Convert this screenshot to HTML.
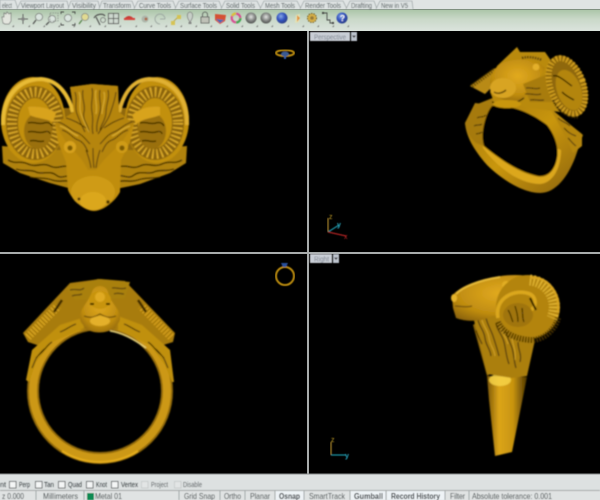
<!DOCTYPE html>
<html><head><meta charset="utf-8"><style>
html,body{margin:0;padding:0;background:#000;width:600px;height:500px;overflow:hidden}
svg{display:block}
text{font-family:"Liberation Sans",sans-serif}
</style></head><body>
<svg width="600" height="500" viewBox="0 0 600 500" xmlns="http://www.w3.org/2000/svg">
<defs>
<filter id="s" x="-5%" y="-5%" width="110%" height="110%"><feGaussianBlur stdDeviation="0.4"/></filter>
<filter id="ic" x="-5%" y="-20%" width="110%" height="140%"><feGaussianBlur stdDeviation="0.55"/></filter>
<filter id="b1" x="-10%" y="-10%" width="120%" height="120%"><feGaussianBlur stdDeviation="0.9"/></filter>
<linearGradient id="tb" x1="0" y1="0" x2="0" y2="1"><stop offset="0" stop-color="#a9c4a6"/><stop offset=".45" stop-color="#c9d8c8"/><stop offset="1" stop-color="#dbe3dd"/></linearGradient>
<radialGradient id="g1" cx=".5" cy=".4" r=".7"><stop offset="0" stop-color="#e2aa20"/><stop offset=".65" stop-color="#bf8c10"/><stop offset="1" stop-color="#8a6207"/></radialGradient>
<linearGradient id="shank" x1="0" y1="0" x2="1" y2="0"><stop offset="0" stop-color="#7a5605"/><stop offset=".3" stop-color="#dca51a"/><stop offset=".65" stop-color="#c8940f"/><stop offset="1" stop-color="#4f3702"/></linearGradient>
<linearGradient id="band" x1="0" y1="0" x2="1" y2="1"><stop offset="0" stop-color="#9c7208"/><stop offset=".5" stop-color="#c9960f"/><stop offset="1" stop-color="#8a6206"/></linearGradient>
<radialGradient id="blue" cx=".4" cy=".35" r=".7"><stop offset="0" stop-color="#7ea2ee"/><stop offset=".5" stop-color="#1c3fc0"/><stop offset="1" stop-color="#0b1f70"/></radialGradient>
<radialGradient id="grey" cx=".5" cy=".4" r=".65"><stop offset="0" stop-color="#e8e8e8"/><stop offset=".5" stop-color="#808080"/><stop offset="1" stop-color="#2a2a2a"/></radialGradient>
</defs>

<rect width="600" height="500" fill="#000"/>

<!-- Top-left: front view -->
<g filter="url(#b1)">
 <!-- backing between horns and head -->
 <path d="M48 108H142V168H48Z" fill="#8f6808"/>
 <!-- side fur -->
 <path d="M2 146L3 163L20 173L50 183L72 189L78 150L50 150Z" fill="#b0820d"/>
 <path d="M187 146L186 163L170 173L140 184L116 189L112 150L140 150Z" fill="#b0820d"/>
 <g fill="none" stroke="#3e2b02" stroke-width="1.400">
  <path d="M8 160c8 5 12 0 20 4s14-2 22 2 12-2 22 1M16 169c8 3 14 0 20 3s14-2 20 3 10-1 18 1M30 177c8 2 14 0 22 3s12-1 22 2"/>
  <path d="M182 160c-8 5-12 0-20 4s-14-2-22 2-12-2-22 1M174 169c-8 3-14 0-20 3s-14-2-20 3-10-1-18 1M160 177c-8 2-14 0-22 3s-12-1-22 2"/>
 </g>
 <!-- left horn -->
 <ellipse cx="33" cy="120" rx="32" ry="43" fill="#c29010"/>
 <ellipse cx="35" cy="123" rx="23" ry="31" fill="none" stroke="#8a6407" stroke-width="12"/>
 <ellipse cx="35" cy="123" rx="23" ry="31" fill="none" stroke="#e3b02c" stroke-width="10" stroke-dasharray="1.400 3"/>
 <path d="M3 125C2 96 20 79 41 79C58 80 68 94 73 112" fill="none" stroke="#e8bb35" stroke-width="4"/>
 <ellipse cx="38" cy="131" rx="14" ry="18" fill="#9a7009"/>
 <path d="M28 123c6-2 10 2 16 0s8 3 8 3M28 132c6-2 10 2 16 0s6 2 6 2M30 141c6-2 8 2 14 0" fill="none" stroke="#2e2002" stroke-width="1.200"/>
 <path d="M28 107C38 106 50 108 56 113L53 122C44 118 34 118 30 115Z" fill="#d8a31a"/>
 <!-- right horn -->
 <ellipse cx="157" cy="120" rx="32" ry="43" fill="#c29010"/>
 <ellipse cx="155" cy="123" rx="23" ry="31" fill="none" stroke="#8a6407" stroke-width="12"/>
 <ellipse cx="155" cy="123" rx="23" ry="31" fill="none" stroke="#e3b02c" stroke-width="10" stroke-dasharray="1.400 3"/>
 <path d="M187 125C188 96 170 79 149 79C133 80 124 92 119 112" fill="none" stroke="#e0b030" stroke-width="4"/>
 <ellipse cx="152" cy="131" rx="14" ry="18" fill="#9a7009"/>
 <path d="M140 123c6-2 10 2 16 0s8 3 8 3M140 132c6-2 10 2 16 0s6 2 6 2M142 141c6-2 8 2 14 0" fill="none" stroke="#2e2002" stroke-width="1.200"/>
 <path d="M160 107C150 106 140 108 132 115L136 124C144 118 154 118 160 115Z" fill="#d8a31a"/>
 <!-- head -->
 <path d="M70 87L92 84L118 86L119 112L134 124L130 142L121 160L120 192C116 200 104 211 94 211C84 211 72 200 68 190L66 162L58 142L55 124L74 112Z" fill="#c08d0f"/>
 <path d="M70 87L92 84L118 86L119 112L134 124L122 142L104 160L96 170L88 170L82 160L66 142L55 124L74 112Z" fill="#b5850f"/>
 <ellipse cx="93" cy="192" rx="22" ry="16" fill="#cf9b15"/>
 <ellipse cx="93" cy="201" rx="13" ry="9" fill="#dba71f"/>
 <circle cx="70" cy="147" r="6" fill="#d8a31c"/><circle cx="70" cy="148" r="2.600" fill="#7e5b06"/>
 <circle cx="122" cy="147" r="6" fill="#cf9b17"/><circle cx="122" cy="148" r="2.600" fill="#7e5b06"/>
 <circle cx="79" cy="199" r="1.500" fill="#4a3302"/><circle cx="108" cy="202" r="1.700" fill="#4a3302"/>
 <g fill="none" stroke="#4e3603" stroke-width="1">
  <path d="M75 92c3 8-1 14 2 22s5 12 8 18M83 90c-2 9 3 14 1 22s4 12 5 20M92 88c2 9-2 14 0 24s-1 14 1 22M100 90c-2 9 2 14 0 22s-4 12-3 20M108 90c2 8-2 14-2 22s-5 12-6 18M116 92c-1 8-4 16-6 22s-8 14-12 20"/>
  <path d="M58 122c8 2 12 8 18 10s10 8 14 12M62 130c8 2 10 8 16 10s8 8 10 12M66 118c8 2 14 6 20 10M132 122c-8 2-12 8-18 10s-10 8-14 12M128 130c-8 2-10 8-16 10s-8 8-10 12M124 118c-8 2-14 6-20 10"/>
  <path d="M86 150c2 6 4 10 5 18M93 148c0 7 0 12 1 20M100 150c-2 6-3 10-4 18"/>
 </g>
 <g fill="none" stroke="#ecc040" stroke-width=".7">
  <path d="M79 92c3 8-1 14 2 22s5 12 8 18M96 90c-2 9 2 14 0 24M104 92c2 8-2 14-2 22M60 126c8 2 12 8 18 10M130 126c-8 2-12 8-18 10"/>
 </g>
</g>
<g filter="url(#s)"><ellipse cx="285" cy="53" rx="9" ry="3" fill="none" stroke="#b98a0e" stroke-width="2"/><ellipse cx="285" cy="54" rx="4" ry="2.500" fill="#3a5a90"/><path d="M284 56h2v3h-2z" fill="#2f5fb0"/></g>

<!-- Top-right: perspective -->
<g filter="url(#b1)">
 <!-- band -->
 <path d="M465 123C466 135 472 148 487 165C500 178 522 193 540 193C556 193 568 176 575 158L583 135L550 108L500 95L475 105Z" fill="url(#band)"/>
 <!-- inner wall -->
 <path d="M483 148C498 168 520 184 540 184C553 183 561 168 561 150L556 148C558 165 552 177 540 177C520 175 500 160 483 146Z" fill="#dca71c"/>
 <!-- hole -->
 <path d="M492 106C505 104 528 110 547 125C555 135 559 148 557 158C555 170 548 177 538 176C520 172 505 163 484 146C480 135 484 115 492 106Z" fill="#000"/>
 <path d="M465 123L475 103L492 105C485 115 480 135 484 146L476 143C470 138 466 130 465 123Z" fill="#a67a0b"/>
 <path d="M477 118c3-2 6 0 9-3M474 126c3-2 6 0 8-2M476 134c2-1 4 0 6-2" stroke="#3e2b02" fill="none"/>
 <path d="M551 110L582 134L582 146L573 153L562 130Z" fill="#b58610"/>
 <path d="M558 118c4 4 8 4 12 8M564 128c4 4 6 6 12 8M568 138c3 3 5 6 8 8" stroke="#3e2b02" fill="none"/>
 <!-- back horn tail -->
 <path d="M470 86L495 68L497 82L485 94Z" fill="#b88a12"/>
 <path d="M472 86L494 70" stroke="#4e3603" stroke-width="4" stroke-dasharray="1.200 1.400"/>
 <!-- head -->
 <path d="M497 66L517 47L520 52L545 52L552 62L552 100L560 112L530 108L520 106L495 104L490 92Z" fill="#b98a10"/>
 <path d="M500 64C515 57 535 58 545 68C538 80 530 92 522 100C510 102 498 100 491 92C488 80 492 70 500 64Z" fill="url(#g1)"/>
 <ellipse cx="503" cy="88" rx="13" ry="10" fill="#d8a420"/>
 <path d="M494 92C498 95 504 92 506 90" stroke="#4a3302" stroke-width="1.300" fill="none"/>
 <path d="M492 102C502 106 515 105 524 98" stroke="#2e2002" stroke-width="1.300" fill="none"/>
 <ellipse cx="507" cy="104" rx="14" ry="4" fill="#c9960f"/>
 <circle cx="536" cy="67" r="3.400" fill="#e4b02c"/>
 <path d="M522 58c8-2 14 0 20 2" stroke="#3e2b02" stroke-width="2.500" stroke-dasharray="1.300 1.300" fill="none"/>
 <path d="M523 84L548 74L552 102L530 102Z" fill="#a87c0c"/>
 <path d="M526 88c6-1 8 2 14 0M525 94c6-1 10 2 16 0M530 100c6-1 8 1 14 0" fill="none" stroke="#3e2b02"/>
 <!-- horn -->
 <ellipse cx="567" cy="86" rx="19" ry="32" transform="rotate(-20 567 86)" fill="#8f6808"/>
 <ellipse cx="567" cy="86" rx="16.500" ry="29" transform="rotate(-20 567 86)" fill="none" stroke="#dfaa22" stroke-width="6" stroke-dasharray="1.300 2.300"/>
 <ellipse cx="569" cy="90" rx="12" ry="21" transform="rotate(-20 569 90)" fill="#b3850d"/>
 <path d="M553 76C558 74 566 82 572 86M562 92c4 4 8 6 12 8" stroke="#2c1e02" stroke-width="1.300" fill="none"/>
 <path d="M553 100C558 112 568 118 578 118" stroke="#2c1e02" stroke-width="2" fill="none" stroke-dasharray="1.400 1.200"/>
</g>
<g filter="url(#s)">
 <path d="M328 232V218" stroke="#a8842a" stroke-width="1.300"/><path d="M328 232L339 225" stroke="#1f8fa0" stroke-width="1.300"/><path d="M328 232L346 236" stroke="#a82020" stroke-width="1.300"/>
 <text x="329" y="219" font-size="7" fill="#c9a32a">z</text><text x="337" y="227" font-size="7" fill="#2aa8c0" font-weight="bold">y</text><text x="344" y="239" font-size="7" fill="#c02828">x</text>
</g>

<!-- Bottom-left: back view -->
<g filter="url(#b1)">
 <circle cx="100" cy="391" r="67" fill="none" stroke="#8f6807" stroke-width="12"/>
 <circle cx="100" cy="391" r="67" fill="none" stroke="#cc9812" stroke-width="8"/>
 <path d="M62 451A71 71 0 0 0 138 451" fill="none" stroke="#e5ad1e" stroke-width="2"/>
 <path d="M23 333L70 283L100 279L125 281L175 333L173 342L160 346L135 331L100 329L65 331L40 346L28 342Z" fill="#a87c0c"/>
 <path d="M28 337L58 306" stroke="#dfaa22" stroke-width="8" stroke-dasharray="1.300 2" fill="none"/>
 <path d="M171 337L141 306" stroke="#d9a21c" stroke-width="8" stroke-dasharray="1.300 2" fill="none"/>
 <path d="M26 380L32 350L60 325L82 318L84 328L52 342L36 362L29 382Z" fill="#c0900f"/>
 <path d="M174 382L170 350L142 325L118 316L118 330L150 345L165 365L172 382Z" fill="#c0900f"/>
 <path d="M32 368c3-6 3-10 8-14s6-8 12-12M36 358c4-4 6-8 10-10M60 332c6-2 10-6 16-8M168 368c-3-6-3-10-8-14s-6-8-12-12M164 358c-4-4-6-8-10-10M140 332c-6-2-10-6-16-8" fill="none" stroke="#3e2b02" stroke-width="1.100"/>
 <path d="M66 288L98 279L130 282L125 298L75 300Z" fill="#a9800f"/>
 <path d="M70 290c6-2 10 2 14-2M112 288c5-1 8 2 14 0M72 296c4-2 6 0 10-2M114 294c4-2 6 0 10 0" fill="none" stroke="#3e2b02"/>
 <path d="M80 318C80 308 88 303 92 292C94 284 106 284 108 292C110 303 120 308 120 318C120 324 114 326 116 328C104 334 94 334 84 328C86 326 80 324 80 318Z" fill="url(#g1)"/>
 <ellipse cx="100" cy="300" rx="11" ry="9" fill="#c8940f"/><ellipse cx="100" cy="297" rx="5" ry="5" fill="#e0aa22"/>
 <path d="M90 304h4M106 304h4" stroke="#3a2802" stroke-width="2"/>
 <path d="M84 316C92 319 96 316 100 314C104 316 108 319 116 316" stroke="#5a3f03" stroke-width="1" fill="none"/>
 <ellipse cx="100" cy="321" rx="10" ry="5" fill="#e4b02a"/>
 <path d="M54 312L62 300" stroke="#3a2802" stroke-width="2.500"/><path d="M146 312L138 300" stroke="#3a2802" stroke-width="2.500"/>
 <path d="M110 331C122 333 132 338 146 348" stroke="#f0dc80" stroke-width="1.300" fill="none"/>
</g>
<g filter="url(#s)"><circle cx="285" cy="276" r="9" fill="none" stroke="#b98a0e" stroke-width="2"/><path d="M281 263h7l-2 4h-3z" fill="#27509c"/></g>

<!-- Bottom-right: side view -->
<g filter="url(#b1)">
 <path d="M487 376L527 377L512 452L495 456L489 400Z" fill="url(#shank)"/>
 <ellipse cx="500" cy="380" rx="11" ry="6" fill="#f7d448" opacity=".85"/>
 <path d="M473 325L487 376L494 372L480 320Z" fill="#8a6407"/>
 <path d="M472 312L500 305L535 340L527 376L512 378L487 374Z" fill="#ab7f0e"/>
 <g fill="none" stroke="#3e2b02" stroke-width="1.100">
  <path d="M478 320c2 8 6 10 7 18s5 10 6 18M486 318c2 8 5 12 7 18s4 12 6 20M496 324c2 8 6 10 8 18s2 14 5 22M506 332c2 8 4 10 6 16s2 14 4 20M518 342c0 8 4 12 2 20M476 330c2 6 4 10 6 14"/>
 </g>
 <g fill="none" stroke="#e2b030" stroke-width=".7">
  <path d="M482 320c2 8 6 10 7 18s5 10 6 18M500 326c2 8 6 10 8 18M512 338c1 8 4 12 3 22"/>
 </g>
 <path d="M452 296C458 288 475 280 495 277C515 273 535 275 548 282L545 310L505 316L492 316C482 322 466 322 456 318L453 308Z" fill="url(#g1)"/>
 <path d="M456 294C462 287 480 280 500 277" stroke="#e8bc3a" stroke-width="2" fill="none"/>
 <ellipse cx="454" cy="298" rx="3" ry="4" fill="#e6b42a"/>
 <circle cx="506" cy="285" r="4" fill="#e2ae24"/>
 <path d="M455 306C460 306 466 308 472 306" stroke="#5a3f03" stroke-width="1" fill="none"/>
 <!-- horn -->
 <ellipse cx="528" cy="307" rx="32" ry="32" fill="#b3840c"/>
 <path d="M530 280A27 27 0 0 1 552 318" fill="none" stroke="#e8bb35" stroke-width="11" stroke-dasharray="1.300 2.300"/>
 <path d="M530 278C548 276 560 292 558 312" fill="none" stroke="#d9a520" stroke-width="2"/>
 <path d="M498 322C503 334 518 340 533 340C548 338 556 326 558 318" fill="none" stroke="#4e3603" stroke-width="6" stroke-dasharray="1.500 1.300"/>
 <path d="M498 318C494 298 515 288 530 294C538 298 536 310 528 311" fill="none" stroke="#dba71d" stroke-width="3.500"/>
 <ellipse cx="518" cy="315" rx="15" ry="12" fill="#a07409"/>
 <path d="M508 310c3 4 3 8 5 12M515 306c2 6 3 10 3 16M522 308c1 5 0 10 2 14" fill="none" stroke="#2e2002" stroke-width="1.100"/>
 <path d="M530 298L536 310" stroke="#2c1e02" stroke-width="2"/>
</g>
<g filter="url(#s)">
 <path d="M331 455V442" stroke="#a8842a" stroke-width="1.300"/><path d="M331 455H346" stroke="#1f8fa0" stroke-width="1.300"/>
 <text x="331" y="442" font-size="7" fill="#c9a32a">z</text><text x="345" y="458" font-size="7" fill="#2aa8c0" font-weight="bold">y</text>
</g>

<!-- Dividers -->
<rect x="307" y="31" width="2" height="443" fill="#a9adad"/>
<rect x="0" y="252" width="600" height="2" fill="#a9adad"/>

<!-- Viewport labels -->
<g filter="url(#s)">
 <rect x="310" y="32" width="40" height="9" fill="#c9ced6"/><rect x="351" y="32" width="6" height="9" fill="#bcc2cc"/>
 <text x="314" y="39.500" font-size="7.500" fill="#7d8590" textLength="32" lengthAdjust="spacingAndGlyphs">Perspective</text>
 <path d="M352 35.500h4l-2 2.400z" fill="#333"/>
 <rect x="310" y="254" width="22" height="9" fill="#c9ced6"/><rect x="333" y="254" width="6" height="9" fill="#bcc2cc"/>
 <text x="314" y="261.500" font-size="7.500" fill="#7d8590" textLength="15" lengthAdjust="spacingAndGlyphs">Right</text>
 <path d="M334 257.500h4l-2 2.400z" fill="#333"/>
</g>

<!-- Tabs & toolbar -->
<rect x="0" y="0" width="600" height="9" fill="#e0e4e4"/>
<rect x="0" y="9" width="600" height="22" fill="url(#tb)"/>
<rect x="0" y="9" width="600" height="1" fill="#7f8f80"/>
<g filter="url(#s)">
 <g fill="#dde2e2" stroke="#8d9597" stroke-width=".6">
  <path d="M0 9V0H15L18 9"/>
  <path d="M17 9L21 1H67L69 9"/><path d="M68 9L71 1H98L100 9"/><path d="M99 9L102 1H132L135 9"/><path d="M134 9L138 1H173L176 9"/><path d="M175 9L179 1H219L222 9"/><path d="M221 9L225 1H257L261 9"/><path d="M260 9L264 1H297L301 9"/><path d="M300 9L304 1H343L347 9"/><path d="M346 9L350 1H374L377 9"/><path d="M376 9L380 1H412L413 9"/>
 </g>
 <g font-size="7.500" fill="#4a5355">
  <text x="2" y="8" textLength="10" lengthAdjust="spacingAndGlyphs">elect</text>
  <text x="21" y="8" textLength="43" lengthAdjust="spacingAndGlyphs">Viewport Layout</text>
  <text x="72" y="8" textLength="24" lengthAdjust="spacingAndGlyphs">Visibility</text>
  <text x="103" y="8" textLength="28" lengthAdjust="spacingAndGlyphs">Transform</text>
  <text x="139" y="8" textLength="32" lengthAdjust="spacingAndGlyphs">Curve Tools</text>
  <text x="180" y="8" textLength="37" lengthAdjust="spacingAndGlyphs">Surface Tools</text>
  <text x="226" y="8" textLength="29" lengthAdjust="spacingAndGlyphs">Solid Tools</text>
  <text x="265" y="8" textLength="30" lengthAdjust="spacingAndGlyphs">Mesh Tools</text>
  <text x="305" y="8" textLength="36" lengthAdjust="spacingAndGlyphs">Render Tools</text>
  <text x="351" y="8" textLength="21" lengthAdjust="spacingAndGlyphs">Drafting</text>
  <text x="381" y="8" textLength="27" lengthAdjust="spacingAndGlyphs">New in V5</text>
 </g>
</g>
<!-- toolbar icons -->
<g filter="url(#ic)" opacity=".85">
 <path d="M3 23L2 17L4 17L4 13L6 14L7 12L9 14L11 13L11 21L9 24H5Z" fill="#e8e8e2" stroke="#666" stroke-width=".7"/>
 <path d="M23 14V24M18 19H28" stroke="#555"/><circle cx="23" cy="19" r="1.800" fill="#777"/>
 <circle cx="39" cy="17" r="3.500" fill="#dfe8e4" stroke="#666" stroke-width=".8"/><path d="M36 20L33 24" stroke="#444" stroke-width="1.300"/>
 <circle cx="52" cy="19" r="3.500" fill="#dfe8e4" stroke="#666" stroke-width=".8"/><path d="M49 22L46 25" stroke="#444" stroke-width="1.300"/><rect x="50" y="13" width="8" height="8" fill="none" stroke="#666" stroke-width=".6" stroke-dasharray="1.500 1"/>
 <circle cx="68" cy="18" r="3.500" fill="#dfe8e4" stroke="#666" stroke-width=".8"/><path d="M61 14V12H64M72 12H75V14M61 23V25H64M75 23V25H72" stroke="#333" stroke-width=".9" fill="none"/>
 <circle cx="85" cy="17" r="3.500" fill="#e6dc8a" stroke="#777" stroke-width=".8"/><path d="M82 20L79 24" stroke="#4a7a3a" stroke-width="1.300"/>
 <path d="M94 18C96 14 103 13 105 16M96 17L100 25" stroke="#444" stroke-width="1.200" fill="none"/><circle cx="103" cy="20" r="2.500" fill="none" stroke="#666" stroke-width=".8"/>
 <rect x="108.500" y="13.500" width="10" height="10" fill="#cfd8d0" stroke="#444" stroke-width=".9"/><path d="M113.500 13V24M108 18.500H119" stroke="#444" stroke-width=".9"/>
 <path d="M124 19C127 15 131 15 134 19Z" fill="#c8201c"/><rect x="124" y="18" width="11" height="2" fill="#d82a20"/>
 <circle cx="145" cy="19" r="3.500" fill="#a9b0a6"/><circle cx="146" cy="19" r="1.500" fill="#a85c3a"/>
 <path d="M165 19A5 5 0 1 0 160 24" stroke="#9aa59f" stroke-width="1" fill="none"/><path d="M160 19H165" stroke="#9aa59f"/>
 <path d="M172 23L178 17" stroke="#b8a040"/><rect x="171" y="21" width="4" height="4" fill="#d8c040"/><rect x="177" y="15" width="4" height="4" fill="#d8c040"/>
 <path d="M190 22C187 18 186 13 190 12C194 13 193 18 190 22" fill="#c9cfca" stroke="#777" stroke-width=".8"/><rect x="188.500" y="22" width="3" height="2" fill="#777"/>
 <rect x="201" y="17" width="8" height="6" fill="#bdbdb4" stroke="#444" stroke-width=".8"/><path d="M202.500 17V14.500A2.500 2.500 0 0 1 207.500 14.500V17" stroke="#444" fill="none" stroke-width=".8"/>
 <path d="M215 14L226 15L225 21L220 24L215 20Z" fill="#d83a1e"/><path d="M216 19L224 20L220 23Z" fill="#2a58b0"/>
 <circle cx="236" cy="18" r="4.300" fill="none" stroke="#d83a8a" stroke-width="2.200"/><path d="M232 16A4.500 4.500 0 0 1 236 13.500" stroke="#e0c020" stroke-width="2.200" fill="none"/><path d="M236 22.500A4.500 4.500 0 0 0 240.500 18" stroke="#2aa040" stroke-width="2.200" fill="none"/>
 <circle cx="251" cy="18" r="5.500" fill="url(#grey)"/><circle cx="266" cy="18" r="5.500" fill="url(#grey)"/><circle cx="282" cy="18" r="5.500" fill="url(#blue)"/>
 <path d="M296 15L300 14L299 22L295 23Z" fill="#e8e4b0"/>
 <path d="M297 15L300 18L297 22Z" fill="#e88a20"/>
 <circle cx="312" cy="18" r="4.500" fill="#d8a830" stroke="#4a3a10" stroke-dasharray="1.500 1"/><circle cx="312" cy="18" r="1.800" fill="#8c6a20"/>
 <path d="M323 13H327V20H330V23H333" stroke="#333" fill="none" stroke-width=".9"/><rect x="322" y="12" width="2" height="2" fill="#333"/><rect x="332" y="22" width="2" height="2" fill="#333"/>
 <circle cx="342" cy="18" r="5.500" fill="url(#blue)"/><text x="340" y="21" font-size="8" font-weight="bold" fill="#fff">?</text>
 <g fill="#666"><path d="M12 27h2v-2zM28 27h2v-2zM43 27h2v-2zM58 27h2v-2zM73 27h2v-2zM89 27h2v-2zM104 27h2v-2zM119 27h2v-2zM135 27h2v-2zM150 27h2v-2zM165 27h2v-2zM180 27h2v-2zM195 27h2v-2zM210 27h2v-2zM226 27h2v-2zM241 27h2v-2zM256 27h2v-2zM271 27h2v-2zM287 27h2v-2zM302 27h2v-2zM317 27h2v-2zM332 27h2v-2zM347 27h2v-2z"/></g>
</g>

<!-- Bottom panels -->
<rect x="0" y="474" width="600" height="26" fill="#dde1e1"/>
<rect x="0" y="473.500" width="600" height="1" fill="#8c9090"/>
<g filter="url(#s)">
 <g fill="#f4f6f6" stroke="#5a5f60" stroke-width=".8">
  <rect x="9.500" y="481.500" width="6.500" height="6.500"/><rect x="35.500" y="481.500" width="6.500" height="6.500"/><rect x="58.500" y="481.500" width="6.500" height="6.500"/><rect x="86.500" y="481.500" width="6.500" height="6.500"/><rect x="111.500" y="481.500" width="6.500" height="6.500"/>
 </g>
 <g fill="#e2e5e5" stroke="#c5c9c9" stroke-width=".8"><rect x="141.500" y="481.500" width="6.500" height="6.500"/><rect x="174.500" y="481.500" width="6.500" height="6.500"/></g>
 <g font-size="7.500" fill="#333a3c">
  <text x="0" y="487" textLength="6" lengthAdjust="spacingAndGlyphs">nt</text>
  <text x="19" y="487" textLength="11" lengthAdjust="spacingAndGlyphs">Perp</text>
  <text x="44" y="487" textLength="10" lengthAdjust="spacingAndGlyphs">Tan</text>
  <text x="68" y="487" textLength="14" lengthAdjust="spacingAndGlyphs">Quad</text>
  <text x="96" y="487" textLength="11" lengthAdjust="spacingAndGlyphs">Knot</text>
  <text x="121" y="487" textLength="17" lengthAdjust="spacingAndGlyphs">Vertex</text>
  <text x="151" y="487" textLength="17" lengthAdjust="spacingAndGlyphs" fill="#666b6d">Project</text>
  <text x="183" y="487" textLength="19" lengthAdjust="spacingAndGlyphs" fill="#666b6d">Disable</text>
 </g>
 <rect x="0" y="491" width="600" height="9" fill="#e0e3e3"/>
 <path d="M0 490.500H600" stroke="#a5a9a9"/>
 <rect x="275" y="491" width="29" height="9" fill="#eef3f6"/><rect x="350" y="491" width="36" height="9" fill="#eef3f6"/><rect x="387" y="491" width="58" height="9" fill="#eef3f6"/>
 <g stroke="#8f9494" stroke-width=".8"><path d="M36 491V500M84 491V500M179 491V500M220 491V500M245 491V500M275 491V500M304 491V500M350 491V500M386 491V500M445 491V500M469 491V500"/></g>
 <rect x="87" y="493" width="7" height="7" fill="#0f8a52"/>
 <g font-size="8.500" fill="#3a4244">
  <text x="2" y="499" textLength="22" lengthAdjust="spacingAndGlyphs">z 0.000</text>
  <text x="43" y="499" textLength="35" lengthAdjust="spacingAndGlyphs">Millimeters</text>
  <text x="95" y="499" textLength="27" lengthAdjust="spacingAndGlyphs">Metal 01</text>
  <text x="184" y="499" textLength="31" lengthAdjust="spacingAndGlyphs">Grid Snap</text>
  <text x="224" y="499" textLength="17" lengthAdjust="spacingAndGlyphs">Ortho</text>
  <text x="250" y="499" textLength="20" lengthAdjust="spacingAndGlyphs">Planar</text>
  <text x="279" y="499" textLength="21" lengthAdjust="spacingAndGlyphs" font-weight="bold" fill="#1c2428">Osnap</text>
  <text x="309" y="499" textLength="36" lengthAdjust="spacingAndGlyphs">SmartTrack</text>
  <text x="354" y="499" textLength="29" lengthAdjust="spacingAndGlyphs" font-weight="bold" fill="#1c2428">Gumball</text>
  <text x="391" y="499" textLength="49" lengthAdjust="spacingAndGlyphs" font-weight="bold" fill="#1c2428">Record History</text>
  <text x="450" y="499" textLength="15" lengthAdjust="spacingAndGlyphs">Filter</text>
  <text x="472" y="499" textLength="80" lengthAdjust="spacingAndGlyphs">Absolute tolerance: 0.001</text>
 </g>
</g>
</svg>
</body></html>
